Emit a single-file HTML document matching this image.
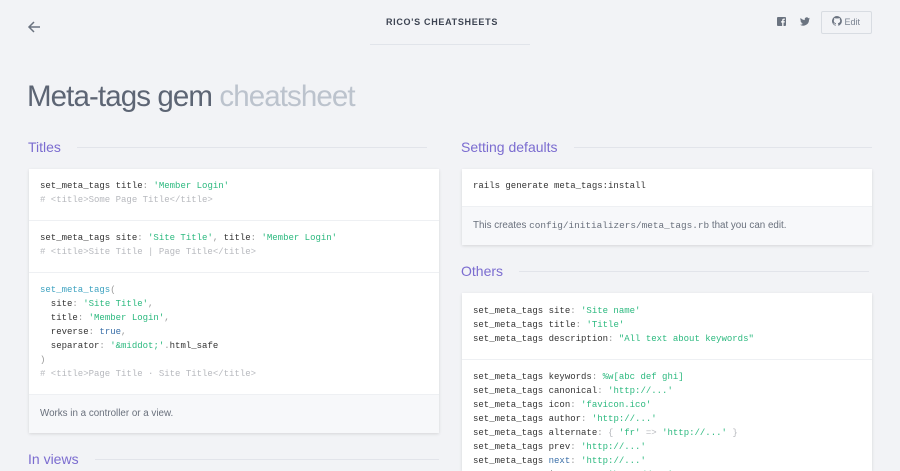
<!DOCTYPE html>
<html><head><meta charset="utf-8"><style>
*{box-sizing:border-box;margin:0;padding:0}
html,body{width:900px;height:471px;overflow:hidden}
body{background:#f2f3f6;font-family:"Liberation Sans",sans-serif;position:relative;color:#333}
.back{position:absolute;left:27px;top:20px}
.brand{position:absolute;left:0;width:884px;top:17px;text-align:center;font-size:9px;font-weight:bold;letter-spacing:0.7px;color:#3d4452}
.bline{position:absolute;left:370px;width:160px;top:44px;height:1px;background:#e1e4ea}
.icons{position:absolute;left:777px;top:17px}
.edit{position:absolute;left:821px;top:11px;width:51px;height:23px;border:1px solid #d8dce2;border-radius:2px;font-size:9px;color:#7a8391;line-height:21px;padding-left:10px}
h1{position:absolute;left:27px;top:80px;font-size:29.5px;font-weight:normal;color:#5d6574;letter-spacing:-0.9px}
h1 span{color:#bcc3cd}
h2{position:absolute;font-size:14px;line-height:16px;font-weight:normal;color:#7b6cd0;display:flex;align-items:center}
h2:after{content:"";display:block;height:1px;background:#e2e4ea;margin-left:16px;flex:1;max-width:350px}
.card{position:absolute;background:#fff;box-shadow:0 1px 3px rgba(0,0,0,.12);overflow:hidden}
pre{font-family:"Liberation Mono",monospace;font-size:9px;line-height:14px;padding:10px 11px 13px;color:#333;border-bottom:1px solid #eef0f3}
.s{color:#2cb97f}.c{color:#b7b9be}.p{color:#999}.f{color:#3da2c0}.k{color:#3a6fa8}
.foot{background:#f7f8fa;font-size:9.8px;color:#69707c;padding:12px 11px;line-height:14px}
.foot code{font-family:"Liberation Mono",monospace;font-size:9.4px}
</style></head><body>
<svg class="back" width="14" height="14" viewBox="0 0 14 14"><path d="M13 7H2M7 2L2 7l5 5" fill="none" stroke="#6b7380" stroke-width="1.5"/></svg>
<div class="brand">RICO'S CHEATSHEETS</div><div class="bline"></div>
<svg class="icons" width="40" height="10" viewBox="0 0 40 10"><rect x="0" y="0" width="9" height="9" rx="1" fill="#6b7380"/><path d="M6.5 9V5.5h1.2l.2-1.3H6.5v-.8c0-.4.1-.6.6-.6h.8V1.6H6.9c-1.1 0-1.7.6-1.7 1.6v1H4v1.3h1.2V9z" fill="#fff"/><path d="M33 1.5c-.4.2-.8.3-1.2.3.4-.3.7-.6.9-1.1-.4.2-.8.4-1.3.5a2 2 0 0 0-3.5 1.9A5.8 5.8 0 0 1 23.7 1a2 2 0 0 0 .6 2.7c-.3 0-.6-.1-.9-.3 0 1 .7 1.8 1.6 2-.3.1-.6.1-.9 0 .3.8 1 1.4 1.9 1.4A4 4 0 0 1 23 7.7 5.8 5.8 0 0 0 32 2.6c.4-.3.7-.6 1-1.1z" fill="#6b7380"/></svg>
<div class="edit"><svg width="10" height="10" viewBox="0 0 16 16" style="vertical-align:-1px"><path fill="#6b7380" d="M8 0a8 8 0 0 0-2.5 15.6c.4 0 .5-.2.5-.4v-1.5c-2.2.5-2.7-1-2.7-1-.4-.9-.9-1.2-.9-1.2-.7-.5.1-.5.1-.5.8.1 1.2.8 1.2.8.7 1.3 1.9.9 2.3.7.1-.5.3-.9.5-1.1-1.8-.2-3.6-.9-3.6-4 0-.9.3-1.6.8-2.1-.1-.2-.4-1 .1-2.1 0 0 .7-.2 2.2.8a7.4 7.4 0 0 1 4 0c1.5-1 2.2-.8 2.2-.8.4 1.1.2 1.9.1 2.1.5.6.8 1.3.8 2.1 0 3.1-1.9 3.8-3.7 4 .3.3.6.8.6 1.5v2.2c0 .2.1.5.6.4A8 8 0 0 0 8 0z"/></svg> Edit</div>
<h1>Meta-tags gem <span>cheatsheet</span></h1>
<h2 style="left:28px;top:139px;width:411px">Titles</h2>
<h2 style="left:461px;top:139px;width:411px">Setting defaults</h2>
<h2 style="left:461px;top:263px;width:411px">Others</h2>
<h2 style="left:28px;top:451px;width:411px">In views</h2>
<div class="card" style="left:29px;top:169px;width:410px">
<pre>set_meta_tags title<span class="p">:</span> <span class="s">'Member Login'</span>
<span class="c"># &lt;title&gt;Some Page Title&lt;/title&gt;</span></pre>
<pre>set_meta_tags site<span class="p">:</span> <span class="s">'Site Title'</span><span class="p">,</span> title<span class="p">:</span> <span class="s">'Member Login'</span>
<span class="c"># &lt;title&gt;Site Title | Page Title&lt;/title&gt;</span></pre>
<pre><span class="f">set_meta_tags</span><span class="p">(</span>
  site<span class="p">:</span> <span class="s">'Site Title'</span><span class="p">,</span>
  title<span class="p">:</span> <span class="s">'Member Login'</span><span class="p">,</span>
  reverse<span class="p">:</span> <span class="k">true</span><span class="p">,</span>
  separator<span class="p">:</span> <span class="s">'&amp;middot;'</span><span class="p">.</span>html_safe
<span class="p">)</span>
<span class="c"># &lt;title&gt;Page Title · Site Title&lt;/title&gt;</span></pre>
<div class="foot">Works in a controller or a view.</div>
</div>
<div class="card" style="left:462px;top:169px;width:410px">
<pre>rails generate meta_tags:install</pre>
<div class="foot">This creates <code>config/initializers/meta_tags.rb</code> that you can edit.</div>
</div>
<div class="card" style="left:462px;top:293px;width:410px;height:178px">
<pre style="padding-top:11px">set_meta_tags site<span class="p">:</span> <span class="s">'Site name'</span>
set_meta_tags title<span class="p">:</span> <span class="s">'Title'</span>
set_meta_tags description<span class="p">:</span> <span class="s">"All text about keywords"</span></pre>
<pre>set_meta_tags keywords<span class="p">:</span> <span class="s">%w[abc def ghi]</span>
set_meta_tags canonical<span class="p">:</span> <span class="s">'http://...'</span>
set_meta_tags icon<span class="p">:</span> <span class="s">'favicon.ico'</span>
set_meta_tags author<span class="p">:</span> <span class="s">'http://...'</span>
set_meta_tags alternate<span class="p">:</span> <span class="c">{</span> <span class="s">'fr'</span> <span class="c">=&gt;</span> <span class="s">'http://...'</span> <span class="c">}</span>
set_meta_tags prev<span class="p">:</span> <span class="s">'http://...'</span>
set_meta_tags <span class="k">next</span><span class="p">:</span> <span class="s">'http://...'</span>
set_meta_tags image_src<span class="p">:</span> <span class="s">'http://...'</span></pre>
</div>
</body></html>
